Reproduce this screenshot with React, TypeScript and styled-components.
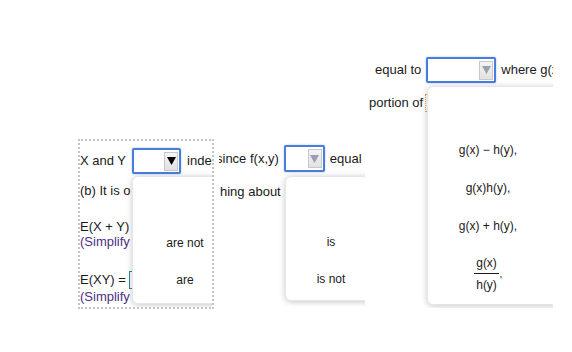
import React from "react";
import styled, { createGlobalStyle } from "styled-components";

const Global = createGlobalStyle`
  html, body { margin: 0; padding: 0; background: #ffffff; }
  body { font-family: "Liberation Sans", Arial, sans-serif; font-size: 13px; color: #1a1a1a; }
`;

const Canvas = styled.div`
  display: flex;
  align-items: flex-start;
  padding-left: 78px;
  width: 572px;
  height: 352px;
  box-sizing: border-box;
  overflow: hidden;
`;

const Panel = styled.div<{ $top: number; $w: number; $h: number; $dotted?: boolean; $ml?: number }>`
  position: relative;
  box-sizing: border-box;
  flex: none;
  margin-top: ${(p) => p.$top}px;
  margin-left: ${(p) => p.$ml ?? 0}px;
  width: ${(p) => p.$w}px;
  height: ${(p) => p.$h}px;
  overflow: hidden;
  border: ${(p) => (p.$dotted ? "2px dotted #c4c4c4" : "none")};
  display: flex;
  flex-direction: column;
`;

const Row = styled.div<{ $mt?: number; $pl?: number; $h?: number; $gap?: number }>`
  display: flex;
  align-items: center;
  white-space: nowrap;
  gap: ${(p) => p.$gap ?? 6}px;
  margin-top: ${(p) => p.$mt ?? 0}px;
  padding-left: ${(p) => p.$pl ?? 0}px;
  height: ${(p) => p.$h ?? 16}px;
  line-height: 16px;
  flex: none;
`;

const Lead = styled.span<{ $shift?: number }>`
  margin-left: ${(p) => p.$shift ?? 0}px;
`;

const Hint = styled.span`
  color: #4e2f86;
`;

const Select = styled.div<{ $w: number; $h: number }>`
  box-sizing: border-box;
  flex: none;
  width: ${(p) => p.$w}px;
  height: ${(p) => p.$h}px;
  border: 2px solid #4a7ddb;
  border-radius: 2px;
  box-shadow: 0 0 2px rgba(74, 125, 219, 0.5);
  background: #fff;
  display: flex;
  align-items: center;
  justify-content: flex-end;
  padding-right: 1px;
`;

const ArrowBtn = styled.div<{ $dark?: boolean }>`
  box-sizing: border-box;
  width: 14px;
  height: 19px;
  border: 1px solid #c8c8c8;
  background: linear-gradient(#f4f4f4, #e2e2e2);
  display: flex;
  align-items: center;
  justify-content: center;
  svg { display: block; }
  path { fill: ${(p) => (p.$dark ? "#000" : "#9aa0ad")}; }
`;

const AnswerBox = styled.span<{ $color: string }>`
  display: inline-block;
  flex: none;
  width: 30px;
  height: 18px;
  box-sizing: border-box;
  border: 1px ${(p) => (p.$color === "orange" ? "dotted #f0a040" : "solid #2a8595")};
`;

const Popup = styled.div<{ $left: number; $top: number; $w: number; $h: number; $pt: number }>`
  position: absolute;
  left: ${(p) => p.$left}px;
  top: ${(p) => p.$top}px;
  width: ${(p) => p.$w}px;
  height: ${(p) => p.$h}px;
  box-sizing: border-box;
  padding-top: ${(p) => p.$pt}px;
  background: #fff;
  border: 1px solid #e6e6e6;
  border-radius: 6px;
  box-shadow: 0 1px 6px rgba(0, 0, 0, 0.22);
  display: flex;
  flex-direction: column;
  font-size: 12px;
`;

const Option = styled.div<{ $w: number; $h: number }>`
  width: ${(p) => p.$w}px;
  height: ${(p) => p.$h}px;
  display: flex;
  align-items: center;
  justify-content: center;
  white-space: nowrap;
  color: #1a1a1a;
  flex: none;
`;

const Frac = styled.span`
  display: inline-flex;
  flex-direction: column;
  align-items: center;
  line-height: 16px;
`;

const Num = styled.span`
  padding: 0 2px 2px;
  border-bottom: 1px solid #1a1a1a;
`;

const Den = styled.span`
  padding: 3px 2px 0;
`;

const FracRow = styled.span`
  display: inline-flex;
  align-items: center;
  gap: 1px;
`;

const Tick = styled.span`
  margin-top: 12px;
  font-size: 10px;
`;

const Arrow = ({ dark }: { dark?: boolean }) => (
  <ArrowBtn $dark={dark}>
    <svg width="9" height="8" viewBox="0 0 9 8">
      <path d="M0 0 H9 L4.5 8 Z" />
    </svg>
  </ArrowBtn>
);

export default function App() {
  return (
    <>
      <Global />
      <Canvas>
        <Panel $top={139} $w={136} $h={170} $dotted>
          <Row $mt={7} $h={26}>
            <span>X and Y</span>
            <Select $w={49} $h={26}>
              <Arrow dark />
            </Select>
            <span>independent</span>
          </Row>
          <Row $mt={9}>
            <span>(b) It is o</span>
          </Row>
          <Row $mt={20} $gap={3}>
            <span>E(X + Y)</span>
            <AnswerBox $color="orange" />
          </Row>
          <Row $mt={-1}>
            <Hint>(Simplify</Hint>
          </Row>
          <Row $mt={20} $h={20} $gap={3}>
            <span>E(XY) =</span>
            <AnswerBox $color="teal" />
          </Row>
          <Row $mt={-1}>
            <Hint>(Simplify</Hint>
          </Row>
          <Popup $left={52} $top={35} $w={106} $h={128} $pt={47}>
            <Option $w={104} $h={37}>are not</Option>
            <Option $w={104} $h={37}>are</Option>
          </Popup>
        </Panel>

        <Panel $top={140} $w={146} $h={166} $ml={5}>
          <Row $mt={5} $h={27} $gap={5}>
            <Lead $shift={-3}>since f(x,y)</Lead>
            <Select $w={41} $h={27}>
              <Arrow />
            </Select>
            <span>equal</span>
          </Row>
          <Row $mt={12} $pl={1}>
            <span>hing about</span>
          </Row>
          <Popup $left={66} $top={36} $w={92} $h={125} $pt={46}>
            <Option $w={90} $h={37}>is</Option>
            <Option $w={90} $h={37}>is not</Option>
          </Popup>
        </Panel>

        <Panel $top={55} $w={188} $h={253}>
          <Row $mt={2} $h={26} $pl={10} $gap={5}>
            <span>equal to</span>
            <Select $w={70} $h={26}>
              <Arrow />
            </Select>
            <span>where g(x) and h(y)</span>
          </Row>
          <Row $mt={12} $pl={4} $gap={2}>
            <span>portion of</span>
            <AnswerBox $color="orange" />
          </Row>
          <Popup $left={62} $top={31} $w={200} $h={219} $pt={44}>
            <Option $w={120} $h={38}>g(x) − h(y),</Option>
            <Option $w={120} $h={38}>g(x)h(y),</Option>
            <Option $w={120} $h={38}>g(x) + h(y),</Option>
            <Option $w={120} $h={58}>
              <FracRow>
                <Frac>
                  <Num>g(x)</Num>
                  <Den>h(y)</Den>
                </Frac>
                <Tick>'</Tick>
              </FracRow>
            </Option>
          </Popup>
        </Panel>
      </Canvas>
    </>
  );
}
